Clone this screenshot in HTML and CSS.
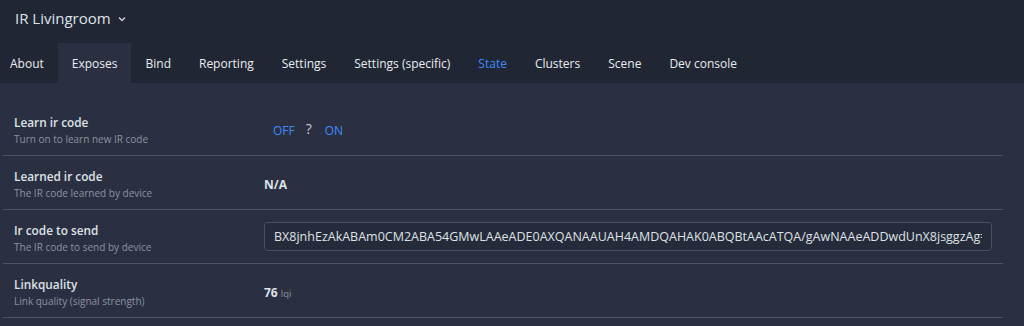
FILE: index.html
```html
<!DOCTYPE html>
<html lang="en">
<head>
  <meta charset="UTF-8">
  <meta name="viewport" content="width=device-width, initial-scale=1.0">
  <title>IR Livingroom</title>
  <link rel="stylesheet" href="styles.css">
</head>
<body>
  <div class="header">
    <div class="device-title">IR Livingroom <span class="caret"><svg width="8" height="6" viewBox="0 0 8 6"><path d="M1 1.5 L4 4.5 L7 1.5" fill="none" stroke="#c9ced6" stroke-width="1.5"/></svg></span></div>
    <ul class="tabs">
      <li>About</li>
      <li class="active">Exposes</li>
      <li>Bind</li>
      <li>Reporting</li>
      <li>Settings</li>
      <li>Settings (specific)</li>
      <li class="link">State</li>
      <li>Clusters</li>
      <li>Scene</li>
      <li>Dev console</li>
    </ul>
  </div>

  <div class="panel">
    <div class="row">
      <div class="label">
        <div class="name">Learn ir code</div>
        <div class="desc">Turn on to learn new IR code</div>
      </div>
      <div class="value toggle">
        <span class="btn-link">OFF</span>
        <span class="unknown">?</span>
        <span class="btn-link">ON</span>
      </div>
    </div>
    <div class="row">
      <div class="label">
        <div class="name">Learned ir code</div>
        <div class="desc">The IR code learned by device</div>
      </div>
      <div class="value text"><strong>N/A</strong></div>
    </div>
    <div class="row">
      <div class="label">
        <div class="name">Ir code to send</div>
        <div class="desc">The IR code to send by device</div>
      </div>
      <div class="value">
        <input class="code-input" type="text" value="BX8jnhEzAkABAm0CM2ABA54GMwLAAeADE0AXQANAAUAH4AMDQAHAK0ABQBtAAcATQA/gAwNAAeADDwdUnX8jsggzAg==">
      </div>
    </div>
    <div class="row">
      <div class="label">
        <div class="name">Linkquality</div>
        <div class="desc">Link quality (signal strength)</div>
      </div>
      <div class="value text"><strong>76</strong> <small class="unit">lqi</small></div>
    </div>
  </div>
</body>
</html>
```

FILE: styles.css
```css
body { margin: 0; background: #2a3042; color: #dee2e6; font-family: "Open Sans", "Noto Sans", sans-serif; font-size: 12px; }
.header { background: #212635; }
.device-title { height: 43px; padding-left: 15px; line-height: 32px; font-size: 15px; color: #dee2e6; }
.caret { display: inline-block; margin-left: 3px; vertical-align: 2px; }
.tabs { display: flex; list-style: none; margin: 0; padding: 0; height: 40px; }
.tabs li { padding: 1px 14px 0; line-height: 39px; color: #e9ecef; }
.tabs li:first-child { padding-left: 10px; }
.tabs li.active { background: #2a3042; }
.tabs li.link { color: #3d8bfd; }
.panel { padding: 19px 21px 8px 3px; }
.row { display: flex; align-items: center; height: 53px; border-bottom: 1px solid #4e5466; }
.label { width: 250px; padding: 3px 0 0 11px; }
.name { font-weight: 600; font-size: 11.8px; line-height: 18px; }
.desc { font-size: 10px; line-height: 17px; color: #8c929e; }
.value { flex: 1; }
.value.text { padding-top: 4px; }
.toggle { display: flex; align-items: center; padding: 3px 0 0 9px; }
.btn-link { color: #3d8bfd; }
.unknown { margin: -3px 13px 0 11px; font-size: 14px; color: #c9ced6; }
.unit { font-size: 9.5px; color: #8c929e; }
.code-input { box-sizing: border-box; width: 728px; height: 29px; padding: 0 9px; background: #262b3b; border: 1px solid #4a5062; border-radius: 4px; color: #dee2e6; font-family: inherit; font-size: 12.5px; }
```
